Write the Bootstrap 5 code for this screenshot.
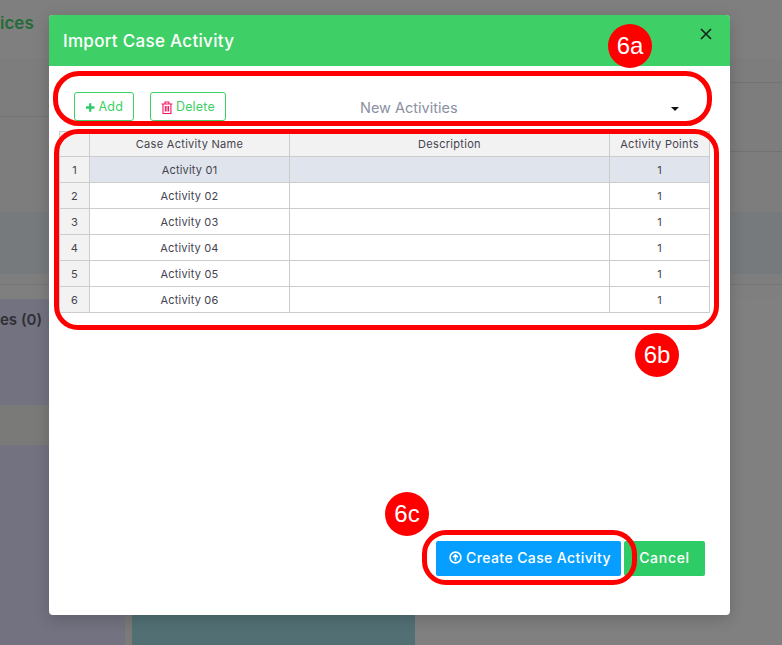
<!DOCTYPE html>
<html lang="en">
<head>
<meta charset="utf-8">
<title>Import Case Activity</title>
<link href="https://cdn.jsdelivr.net/npm/bootstrap@5.3.0/dist/css/bootstrap.min.css" rel="stylesheet">
<style>
html,body{height:645px;overflow:hidden;background:#808080;font-family:"Inter","Open Sans",sans-serif}
.stage{height:645px;position:relative;overflow:hidden}
.bg-a{height:58px;background:#7f7f7f;color:#256b39;font-weight:600;font-size:17px;line-height:47px}
.bg-rows{height:154px;background:#7d7d7d}
.bg-rows-l{width:391px}
.bg-rows-r{flex:1 1 auto}
.l1{height:59px;border-bottom:1px solid #74747a}
.r1{height:25px;border-bottom:1px solid #727272}
.r2{height:69px;border-bottom:1px solid #727272}
.bg-e{height:62px;background:#777a7c}
.bg-f{height:11px;background:#7e7e7e;border-bottom:1px solid #757575}
.bg-g{height:14px;background:#7f7f7f}
.bg-main{height:346px}
.bg-left{width:125px;background:#737280;color:#2f2f35;font-weight:600;font-size:15px}
.bg-title{height:106px;padding-top:9px;line-height:24px}
.bg-title2{height:40px;background:#7a7a78}
.bg-gap{width:7px;background:#7a7a78}
.bg-mid{width:283px}
.bg-teal{height:30px;margin-top:316px;background:#527074}
.dlg{position:absolute;left:49px;top:15px;width:681px;height:600px;background:#fff;border:0;border-radius:4px;box-shadow:0 4px 16px rgba(0,0,0,.18);overflow:hidden}
.dlg-head{height:51px;background:#3ecf67;padding:0 14px;border:0;border-radius:0}
.dlg-title{font-size:17px;font-weight:500;color:#fff;line-height:50px;margin:0;letter-spacing:.3px}
.dlg-x{background:none;border:0;padding:0;position:absolute;right:17px;top:12px;width:14px;height:14px;line-height:0}
.tools{height:57px;padding:0 25px 2px;position:relative;align-items:flex-end}
.out-btn{background:#fff;border:1px solid #3ecf67;color:#3ecf67;border-radius:3px;height:29px;font-size:12.5px;padding:1px 10px 0;display:inline-flex;align-items:center;gap:3px;line-height:1;letter-spacing:.2px}
.out-add{width:60px}
.out-del{width:76px;margin-left:16px}
.new-act{position:absolute;left:311px;top:33px;color:#8b90a3;font-size:14.5px;line-height:18px}
.caret-tri{position:absolute;left:622px;top:41px;width:0;height:0;border-left:4.5px solid transparent;border-right:4.5px solid transparent;border-top:4.5px solid #111}
.grid-wrap{padding:8px 20px 0 10px}
.hot{width:650px;margin:0;table-layout:fixed;border-collapse:collapse;color:#44444f;font-size:11px;letter-spacing:.2px}
.hot th,.hot td{border:1px solid #ccc;text-align:center;padding:1px 0 0;vertical-align:middle;font-weight:400;height:26px;background:#fff;color:#44444f}
.hot thead th{background:#f2f2f2;height:25px;padding:0;font-weight:400;letter-spacing:.3px}
.hot tbody th{background:#f2f2f2}
.hot tr.sel td{background:#e0e4ec}
.c1{width:30px}.c2{width:200px}.c3{width:320px}.c4{width:100px}
.foot{position:absolute;left:387px;top:526px;gap:3px}
.fbtn{height:35px;border:0;color:#fff;border-radius:2px;font-size:14px;font-weight:500;display:inline-flex;align-items:center;justify-content:center;gap:4px;padding:0 0 2px;letter-spacing:.4px}
.fbtn-a{width:185px;background:#069fff;padding-left:3px}
.fbtn-b{width:81px;background:#2ecc66;letter-spacing:.7px}
.ring{position:absolute;border:5px solid #f00;background:transparent;pointer-events:none}
.ring-a{left:53px;top:71px;width:659px;height:55px;border-radius:26px}
.ring-b{left:54px;top:129px;width:665px;height:201px;border-radius:24px}
.ring-c{left:422px;top:530px;width:215px;height:55px;border-radius:24px}
.tagdot{position:absolute;width:44px;height:44px;border-radius:50%;background:#f00;color:#fff;font-family:"Liberation Sans",sans-serif;font-size:24px;line-height:44px;text-align:center}
.tag-a{left:608px;top:24px}
.tag-b{left:635px;top:333px}
.tag-c{left:385px;top:492px}
</style>
</head>
<body>
<div class="stage">
  <div class="bg-a">ices</div>
  <div class="bg-rows d-flex">
    <div class="bg-rows-l"><div class="l1"></div></div>
    <div class="bg-rows-r"><div class="r1"></div><div class="r2"></div></div>
  </div>
  <div class="bg-e"></div>
  <div class="bg-f"></div>
  <div class="bg-g"></div>
  <div class="bg-main d-flex">
    <div class="bg-left d-flex flex-column">
      <div class="bg-title">es (0)</div>
      <div class="bg-title2"></div>
    </div>
    <div class="bg-gap"></div>
    <div class="bg-mid"><div class="bg-teal"></div></div>
  </div>

  <div class="dlg modal-content">
    <div class="dlg-head d-flex align-items-center">
      <h5 class="dlg-title">Import Case Activity</h5>
      <button class="dlg-x" type="button" aria-label="Close">
        <svg width="14" height="14" viewBox="0 0 14 14"><path d="M2 2 12 12M12 2 2 12" stroke="#14261b" stroke-width="1.7" fill="none"/></svg>
      </button>
    </div>
    <div class="tools d-flex">
      <button class="out-btn out-add" type="button">
        <svg width="11" height="11" viewBox="0 0 11 11"><path d="M5.5 1v9M1 5.5h9" stroke="#2ecc66" stroke-width="2.4" fill="none"/></svg>Add
      </button>
      <button class="out-btn out-del" type="button">
        <svg width="12" height="13" viewBox="0 0 12 13" fill="none" stroke="#f5145f" stroke-width="1.1"><path d="M.5 3h11M4 3V1h4v2M2 3v9.5h8V3M4.4 5v5.5M6 5v5.5M7.6 5v5.5"/></svg>Delete
      </button>
      <div class="new-act">New Activities</div>
      <div class="caret-tri"></div>
    </div>
    <div class="grid-wrap">
      <table class="hot">
        <colgroup><col class="c1"><col class="c2"><col class="c3"><col class="c4"></colgroup>
        <thead><tr><th></th><th>Case Activity Name</th><th>Description</th><th>Activity Points</th></tr></thead>
        <tbody>
          <tr class="sel"><th>1</th><td>Activity 01</td><td></td><td>1</td></tr>
          <tr><th>2</th><td>Activity 02</td><td></td><td>1</td></tr>
          <tr><th>3</th><td>Activity 03</td><td></td><td>1</td></tr>
          <tr><th>4</th><td>Activity 04</td><td></td><td>1</td></tr>
          <tr><th>5</th><td>Activity 05</td><td></td><td>1</td></tr>
          <tr><th>6</th><td>Activity 06</td><td></td><td>1</td></tr>
        </tbody>
      </table>
    </div>
    <div class="foot d-flex">
      <button class="fbtn fbtn-a" type="button">
        <svg width="13" height="13" viewBox="0 0 12 12" fill="none" stroke="#fff" stroke-width="1.5"><circle cx="6" cy="6" r="5"/><path d="M6 9V3.6M3.8 5.8 6 3.6l2.2 2.2"/></svg>Create Case Activity
      </button>
      <button class="fbtn fbtn-b" type="button">Cancel</button>
    </div>
  </div>

  <div class="ring ring-a"></div>
  <div class="ring ring-b"></div>
  <div class="ring ring-c"></div>
  <div class="tagdot tag-a">6a</div>
  <div class="tagdot tag-b">6b</div>
  <div class="tagdot tag-c">6c</div>
</div>
<script src="https://cdn.jsdelivr.net/npm/bootstrap@5.3.0/dist/js/bootstrap.bundle.min.js"></script>
</body>
</html>
